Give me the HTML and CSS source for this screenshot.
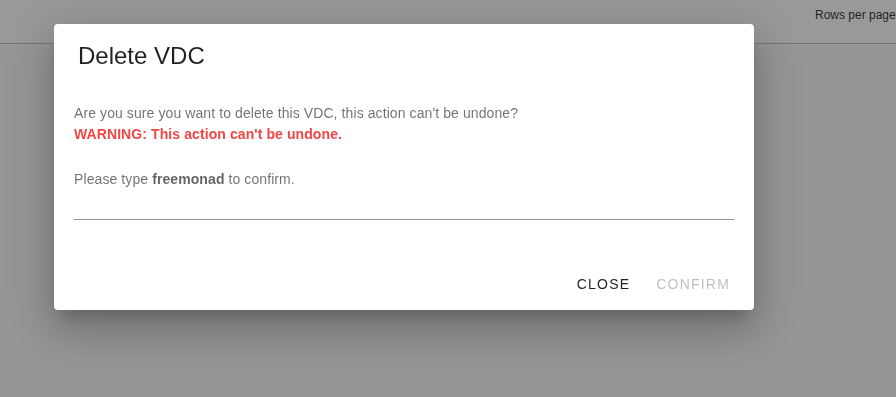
FILE: index.html
```html
<!DOCTYPE html>
<html>
<head>
<meta charset="utf-8">
<link rel="stylesheet" href="styles.css">
</head>
<body>
<div class="page">
  <header class="topbar">
    <span class="rows-label">Rows per page</span>
  </header>
  <main class="content-area"></main>
</div>
<div class="backdrop"></div>
<div class="dialog" role="dialog">
  <h2 class="dialog-title">Delete VDC</h2>
  <div class="dialog-content">
    <p class="text">Are you sure you want to delete this VDC, this action can't be undone?<br><span class="warning">WARNING: This action can't be undone.</span></p>
    <p class="text confirm-text">Please type <b>freemonad</b> to confirm.</p>
    <div class="field"><input class="field-input" type="text"></div>
  </div>
  <div class="dialog-actions">
    <button class="btn btn-close">Close</button>
    <button class="btn btn-disabled" disabled>Confirm</button>
  </div>
</div>
</body>
</html>
```

FILE: styles.css
```css
* { box-sizing: border-box; }
html, body {
  margin: 0;
  padding: 0;
  width: 896px;
  height: 397px;
  overflow: hidden;
  font-family: "Liberation Sans", Arial, sans-serif;
}
.page {
  display: flex;
  flex-direction: column;
  height: 397px;
  background: #fafafa;
}
.topbar {
  height: 44px;
  background: #ffffff;
  border-bottom: 1px solid #c6c6c6;
  display: flex;
  justify-content: flex-end;
  align-items: flex-start;
  white-space: nowrap;
  overflow: hidden;
}
.rows-label {
  font-size: 12px;
  line-height: 14px;
  padding-top: 8px;
  margin-right: -80px;
  color: rgba(0,0,0,0.8);
  width: 161px;
}
.content-area { flex: 1; }
.backdrop {
  position: fixed;
  inset: 0;
  background: rgba(0,0,0,0.4);
}
.dialog {
  position: absolute;
  left: 54px;
  top: 24px;
  width: 700px;
  background: #fff;
  border-radius: 4px;
  box-shadow: 0px 11px 15px -7px rgba(0,0,0,0.2), 0px 24px 38px 3px rgba(0,0,0,0.14), 0px 9px 46px 8px rgba(0,0,0,0.12);
  display: flex;
  flex-direction: column;
}
.dialog-title {
  margin: 0;
  padding: 16px 24px 16px;
  font-size: 24px;
  line-height: 32px;
  font-weight: 400;
  color: rgba(0,0,0,0.87);
}
.dialog-content {
  padding: 15px 20px 38px;
}
.text {
  margin: 0;
  font-size: 14px;
  line-height: 21px;
  letter-spacing: 0.09px;
  color: rgba(0,0,0,0.56);
}
.text b { font-weight: 700; color: rgba(0,0,0,0.62); }
.warning {
  color: #f24646;
  font-weight: 700;
}
.confirm-text { margin-top: 24px; }
.field {
  margin-top: 8px;
  border-bottom: 1px solid rgba(0,0,0,0.42);
}
.field-input {
  display: block;
  width: 100%;
  height: 21px;
  border: 0;
  padding: 0;
  outline: none;
  background: transparent;
  font: inherit;
  font-size: 14px;
}
.dialog-actions {
  display: flex;
  justify-content: flex-end;
  padding: 8px 16px 8px;
  gap: 10px;
}
.btn {
  font-family: "Liberation Sans", Arial, sans-serif;
  font-size: 14px;
  line-height: 24px;
  height: 36px;
  padding: 6px 8px;
  min-width: 64px;
  border: 0;
  background: transparent;
  text-transform: uppercase;
  letter-spacing: 1.2px;
  font-weight: 400;
  border-radius: 4px;
}
.btn-close { color: rgba(0,0,0,0.87); }
.btn-disabled { color: rgba(0,0,0,0.26); }
```
